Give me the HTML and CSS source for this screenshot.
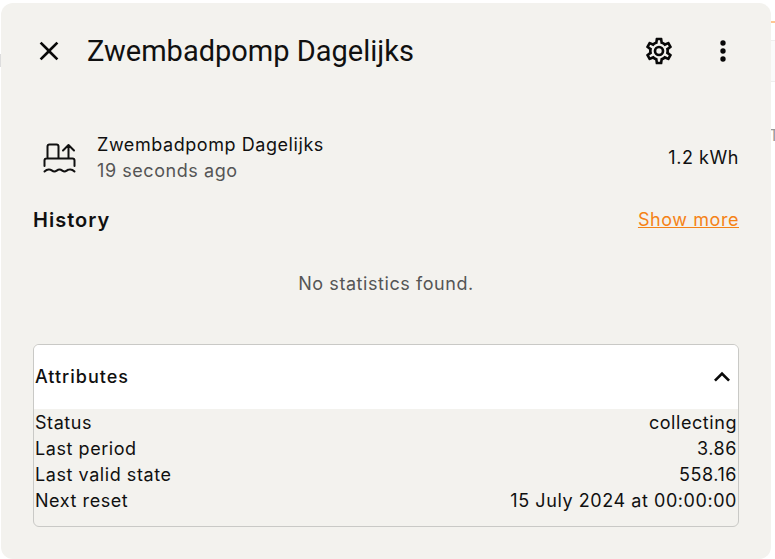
FILE: index.html
```html
<!DOCTYPE html>
<html lang="en">
<head>
<meta charset="utf-8">
<title>Zwembadpomp Dagelijks</title>
<meta name="viewport" content="width=device-width, initial-scale=1">
<link rel="stylesheet" href="styles.css">
</head>
<body>
<div class="backdrop-left" aria-hidden="true"></div>
<main class="dialog">
  <header class="dialog-header">
    <button class="icon-button" type="button" aria-label="Close">
      <svg width="32" height="32" viewBox="0 0 24 24"><path d="M19,6.41L17.59,5L12,10.59L6.41,5L5,6.41L10.59,12L5,17.59L6.41,19L12,13.41L17.59,19L19,17.59L13.41,12L19,6.41Z"/></svg>
    </button>
    <h1 class="title">Zwembadpomp Dagelijks</h1>
    <button class="icon-button" type="button" aria-label="Settings">
      <svg width="32" height="32" viewBox="0 0 24 24"><path d="M12,8A4,4 0 0,1 16,12A4,4 0 0,1 12,16A4,4 0 0,1 8,12A4,4 0 0,1 12,8M12,10A2,2 0 0,0 10,12A2,2 0 0,0 12,14A2,2 0 0,0 14,12A2,2 0 0,0 12,10M10,22C9.75,22 9.54,21.82 9.5,21.58L9.13,18.93C8.5,18.68 7.96,18.34 7.44,17.94L4.95,18.95C4.73,19.03 4.46,18.95 4.34,18.73L2.34,15.27C2.21,15.05 2.27,14.78 2.46,14.63L4.57,12.97L4.5,12L4.57,11L2.46,9.37C2.27,9.22 2.21,8.95 2.34,8.73L4.34,5.27C4.46,5.05 4.73,4.96 4.95,5.05L7.44,6.05C7.96,5.66 8.5,5.32 9.13,5.07L9.5,2.42C9.54,2.18 9.75,2 10,2H14C14.25,2 14.46,2.18 14.5,2.42L14.87,5.07C15.5,5.32 16.04,5.66 16.56,6.05L19.05,5.05C19.27,4.96 19.54,5.05 19.66,5.27L21.66,8.73C21.79,8.95 21.73,9.22 21.54,9.37L19.43,11L19.5,12L19.43,13L21.54,14.63C21.73,14.78 21.79,15.05 21.66,15.27L19.66,18.73C19.54,18.95 19.27,19.04 19.05,18.95L16.56,17.95C16.04,18.34 15.5,18.68 14.87,18.93L14.5,21.58C14.46,21.82 14.25,22 14,22H10M11.25,4L10.88,6.61C9.68,6.86 8.62,7.5 7.85,8.39L5.44,7.35L4.69,8.65L6.8,10.2C6.4,11.37 6.4,12.64 6.8,13.8L4.68,15.36L5.43,16.66L7.86,15.62C8.63,16.5 9.68,17.14 10.87,17.38L11.24,20H12.76L13.13,17.39C14.32,17.14 15.37,16.5 16.14,15.62L18.57,16.66L19.32,15.36L17.2,13.81C17.6,12.64 17.6,11.37 17.2,10.2L19.31,8.65L18.56,7.35L16.15,8.39C15.38,7.5 14.32,6.86 13.12,6.62L12.75,4H11.25Z"/></svg>
    </button>
    <button class="icon-button" type="button" aria-label="More options">
      <svg width="32" height="32" viewBox="0 0 24 24"><path d="M12,16A2,2 0 0,1 14,18A2,2 0 0,1 12,20A2,2 0 0,1 10,18A2,2 0 0,1 12,16M12,10A2,2 0 0,1 14,12A2,2 0 0,1 12,14A2,2 0 0,1 10,12A2,2 0 0,1 12,10M12,4A2,2 0 0,1 14,6A2,2 0 0,1 12,8A2,2 0 0,1 10,6A2,2 0 0,1 12,4Z"/></svg>
    </button>
  </header>

  <div class="content">
    <section class="entity">
      <svg class="entity-icon" width="36" height="36" viewBox="0 0 36 36"><path d="M3.500 26V20.500Q3.500 18.500 5.500 18.500H31.500Q33.500 18.500 33.500 20.500V26M6.500 18.500V6.500Q6.500 4.500 8.500 4.500H15.500Q17.500 4.500 17.500 6.500V18.500M27.500 18.500V5M22 10.500L27.500 5L33 10.500M3.500 31.500Q6 29 8.500 29.500C10.500 29.500 11 31.500 13.500 31.500C15.500 31.500 16 29.500 18.500 29.500C21 29.500 21.500 31.500 23.500 31.500C25.500 31.500 26 29.500 28.500 29.500Q31 29 33.500 31.500"/></svg>
      <div class="entity-info">
        <div>Zwembadpomp Dagelijks</div>
        <div class="secondary">19 seconds ago</div>
      </div>
      <div>1.2 kWh</div>
    </section>

    <section>
      <div class="section-header">
        <h2 class="section-title">History</h2>
        <a class="more" href="#history">Show more</a>
      </div>
      <p class="empty secondary">No statistics found.</p>
    </section>

    <section class="panel">
      <button class="panel-header" type="button" aria-expanded="true" aria-controls="attributes">
        <span>Attributes</span>
        <svg width="32" height="32" viewBox="0 0 24 24"><path d="M7.410,15.410L12,10.830L16.590,15.410L18,14L12,8L6,14L7.410,15.410Z"/></svg>
      </button>
      <table class="attributes" id="attributes">
        <tbody>
          <tr><th scope="row">Status</th><td>collecting</td></tr>
          <tr><th scope="row">Last period</th><td>3.86</td></tr>
          <tr><th scope="row">Last valid state</th><td>558.16</td></tr>
          <tr><th scope="row">Next reset</th><td>15 July 2024 at 00:00:00</td></tr>
        </tbody>
      </table>
    </section>
  </div>
</main>
<div class="backdrop-right" aria-hidden="true">
  <div class="tab-marker"></div>
  <div class="toolbar"></div>
  <div class="label">T</div>
</div>
</body>
</html>
```
FILE: styles.css
```css
* {
  box-sizing: border-box;
}

body {
  margin: 0;
  min-height: 100vh;
  display: grid;
  grid-template-columns: 1px minmax(0, 1fr) 4px;
  background: #fff;
  color: #101010;
  font: 18px/26px Inter, "Liberation Sans", sans-serif;
  letter-spacing: 0.03125em;
}

h1,
h2,
p {
  margin: 0;
}

button {
  padding: 0;
  border: 0;
  color: inherit;
  font: inherit;
  letter-spacing: inherit;
  cursor: pointer;
}

svg {
  display: block;
  flex: none;
  fill: #080808;
}

.backdrop-left {
  padding-top: 54px;
}

.backdrop-left::before {
  content: "";
  display: block;
  height: 13px;
  background: #ddd;
}

.backdrop-right {
  overflow: hidden;
  padding-top: 21px;
}

.tab-marker {
  height: 2px;
  background: #ffc793;
}

.toolbar {
  height: 42px;
  margin-top: 17px;
  border: solid #eee;
  border-width: 1px 0;
  background: #fafafa;
}

.label {
  margin-top: 40px;
  color: #999;
  font-size: 16px;
  letter-spacing: 0;
  text-indent: -2px;
}

.dialog {
  margin-top: 3px;
  border-radius: 12px;
  background: #f3f2ee;
}

.dialog-header {
  display: flex;
  align-items: center;
  height: 96px;
  padding: 0 16px;
}

.icon-button {
  display: grid;
  place-items: center;
  width: 64px;
  height: 64px;
  background: none;
}

.title {
  flex: 1;
  padding-left: 6px;
  font: 400 29px/40px Roboto, sans-serif;
  letter-spacing: 0;
}

.content {
  padding: 33px 32px 32px;
}

.entity {
  display: flex;
  align-items: center;
  padding-left: 8px;
}

.entity-icon {
  fill: none;
  stroke: #101010;
  stroke-width: 2;
  stroke-linecap: round;
  stroke-linejoin: round;
}

.entity-info {
  flex: 1;
  padding-left: 20px;
}

.secondary {
  color: #555;
}

.section-header {
  display: flex;
  align-items: center;
  justify-content: space-between;
  margin-top: 20px;
  line-height: 32px;
}

.section-title {
  font-size: 20px;
  font-weight: 600;
  letter-spacing: 1px;
}

.more {
  color: #f58216;
}

.empty {
  padding: 35px 0 47px;
  text-align: center;
}

.panel {
  overflow: hidden;
  border: 1px solid #c9c9c6;
  border-radius: 6px;
}

.panel-header {
  display: flex;
  align-items: center;
  justify-content: space-between;
  width: 100%;
  height: 64px;
  padding-left: 1px;
  background: #fff;
  font-weight: 500;
  letter-spacing: 1px;
}

.attributes {
  width: 100%;
  margin: 1px 0 12px;
  border-collapse: collapse;
}

.attributes th,
.attributes td {
  padding: 0 1px;
  font-weight: 400;
  text-align: left;
}

.attributes td {
  text-align: right;
}
```
